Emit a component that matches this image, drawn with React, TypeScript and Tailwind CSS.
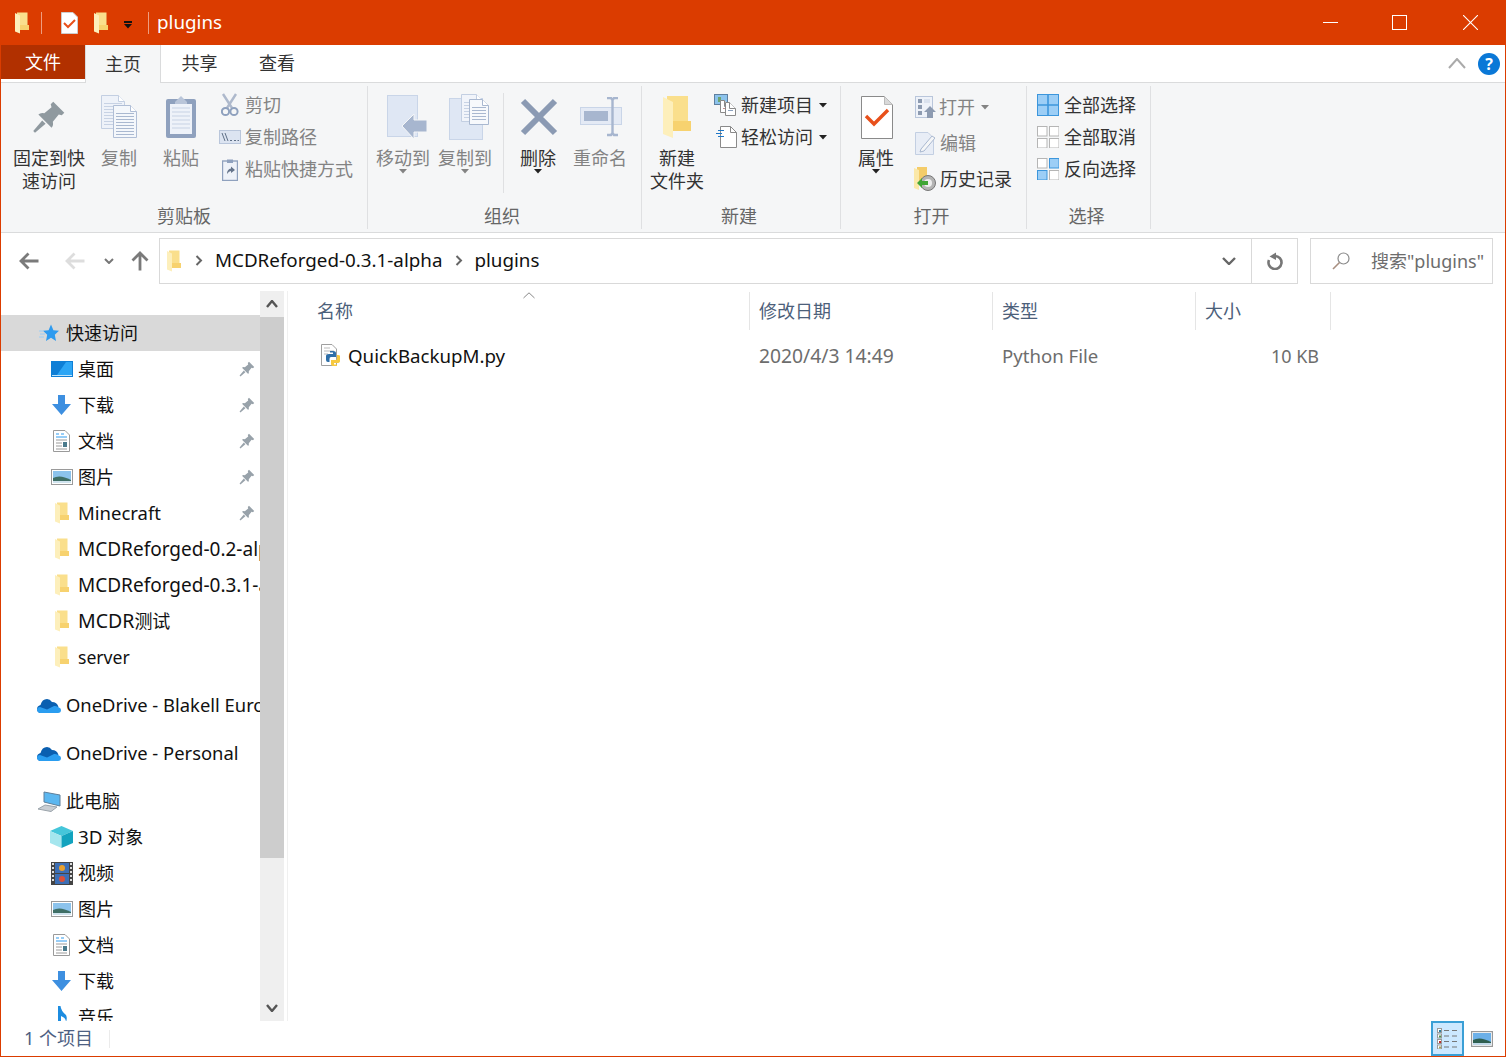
import type { ReactNode } from "react"

const FONT = { fontFamily: '"Noto Sans", "Noto Sans CJK SC", sans-serif' }
// Latin runs come out a touch narrow next to the reference, CJK is right at 18px
const LATIN = "text-[18.8px]"

function Folder({ w = 14, h = 22 }: { w?: number; h?: number }) {
  return (
    <svg width={w} height={h} viewBox="0 0 14 22">
      <path d="M2 0.5H12.5V13H14V18H2Z" fill="#FADF8C" />
      <path d="M5 13H14V18H5Z" fill="#F7D26F" />
      <path d="M0 1L5 3.5V21.5L0 19.5Z" fill="#FDEFBB" />
    </svg>
  )
}

function Caret({ color = "#222" }: { color?: string }) {
  return (
    <svg width="8" height="5" viewBox="0 0 8 5">
      <path d="M0 0H8L4 4.5Z" fill={color} />
    </svg>
  )
}

function Pin({ size = 16, color = "#98A2AA" }: { size?: number; color?: string }) {
  return (
    <svg width={size} height={size} viewBox="0 0 16 16">
      <path d="M10 .8L15.2 6 14 7.2 12.6 6.8 9.8 10.2Q10.2 12 9.2 13L3 6.8Q4 5.8 5.8 6.2L9.2 3.4 8.8 2Z" fill={color} />
      <path d="M4.8 9.6L6.4 11.2 1.4 15.4.6 14.6Z" fill={color} />
    </svg>
  )
}

function Page({ x, y, w, h, stroke, fill, line }: { x: number; y: number; w: number; h: number; stroke: string; fill: string; line: string }) {
  const rows = []
  for (let ly = y + 8; ly < y + h - 3; ly += 3) rows.push(ly)
  return (
    <g>
      <path d={`M${x + 0.5} ${y + 0.5}H${x + w - 6.5}L${x + w - 0.5} ${y + 6.5}V${y + h - 0.5}H${x + 0.5}Z`} fill={fill} stroke={stroke} />
      <path d={`M${x + w - 6.5} ${y + 0.5}V${y + 6.5}H${x + w - 0.5}`} fill="#fff" stroke={stroke} />
      {rows.map((ly) => (
        <path key={ly} d={`M${x + 3} ${ly + 0.5}H${x + w - 3}`} stroke={line} />
      ))}
    </g>
  )
}

function CopyIcon() {
  return (
    <svg width="37" height="44" viewBox="0 0 37 44">
      <Page x={0} y={0} w={24} h={34} stroke="#C3CFE2" fill="#EEF2F9" line="#C7D2E4" />
      <Page x={12} y={10} w={24} h={33} stroke="#B0BED6" fill="#F4F7FB" line="#A9B8D0" />
    </svg>
  )
}

function PasteIcon() {
  return (
    <svg width="32" height="44" viewBox="0 0 32 44">
      <rect x="1" y="4" width="30" height="39" rx="2" fill="#8FA1BE" />
      <rect x="5" y="9" width="22" height="30" fill="#EEF2F9" />
      {[13, 17, 21, 25, 29, 33].map((y) => (
        <path key={y} d={`M7 ${y}H25`} stroke="#C7D2E4" />
      ))}
      <path d="M10 7L13 4 16 1 19 4 22 7V9H10Z" fill="#B9C5D9" />
    </svg>
  )
}

function ScissorsIcon() {
  return (
    <svg width="18" height="24" viewBox="0 0 18 24">
      <path d="M2 1L11 15M15 1L6 15" stroke="#AEB9CC" strokeWidth="2.4" />
      <circle cx="4.5" cy="18.5" r="3.6" fill="none" stroke="#8FA1BE" strokeWidth="2" />
      <circle cx="13" cy="18.5" r="3.6" fill="none" stroke="#8FA1BE" strokeWidth="2" />
    </svg>
  )
}

function CopyPathIcon() {
  return (
    <svg width="22" height="14" viewBox="0 0 22 14">
      <rect x=".5" y=".5" width="21" height="13" fill="#DCE4F1" stroke="#B9C6DB" />
      <path d="M3 3L6 11M6 3L9 11" stroke="#5F7087" />
      <path d="M11 10.5H13M15 10.5H17M18.5 10.5H20" stroke="#5F7087" />
    </svg>
  )
}

function ShortcutIcon() {
  return (
    <svg width="16" height="23" viewBox="0 0 16 23">
      <rect x=".5" y="3" width="15" height="19.5" fill="#EEF2F9" stroke="#8FA1BE" strokeWidth="1.4" />
      <path d="M5 1.5H11V5H5Z" fill="#8FA1BE" />
      <path d="M5 16Q5 11 9 10.5V8.5L13 12 9 15V13Q7 13 5 16Z" fill="#66758C" />
    </svg>
  )
}

function MoveIcon() {
  return (
    <svg width="40" height="44" viewBox="0 0 40 44" className="ml-[8px]">
      <rect x=".5" y=".5" width="30" height="41" fill="#DFE7F4" stroke="#C9D5E8" />
      <path d="M15 31L27 19V25H40V37H27V44Z" fill="#A7B6CF" stroke="#F5F6F7" />
    </svg>
  )
}

function CopyToIcon() {
  return (
    <svg width="41" height="46" viewBox="0 0 41 46" className="ml-[9px]">
      <rect x=".5" y="4.5" width="33" height="41" fill="#DFE7F4" stroke="#C9D5E8" />
      <Page x={12} y={0} w={22} h={28} stroke="#C3CFE2" fill="#F1F4FA" line="#C7D2E4" />
      <Page x={20} y={5} w={20} h={26} stroke="#A9B8D0" fill="#F7F9FC" line="#A9B8D0" />
    </svg>
  )
}

function DeleteIcon() {
  return (
    <svg width="38" height="38" viewBox="0 0 38 38" className="ml-[2px]">
      <path d="M3 3L35 35M35 3L3 35" stroke="#8B9AB3" strokeWidth="6" />
    </svg>
  )
}

function RenameIcon() {
  return (
    <svg width="42" height="40" viewBox="0 0 42 40" className="ml-[2px]">
      <rect x=".5" y="10.5" width="41" height="17" fill="#E4EAF5" stroke="#C9D5E8" />
      <rect x="4" y="14" width="24" height="10" fill="#A7B6CF" />
      <path d="M27 1H31L32.5 3 34 1H38M32.5 3V36M27 38H31L32.5 36 34 38H38" fill="none" stroke="#A7B6CF" strokeWidth="2.4" />
    </svg>
  )
}

function NewItemIcon() {
  return (
    <svg width="22" height="22" viewBox="0 0 22 22" className="-ml-[2px]">
      <rect x=".5" y=".5" width="13" height="10" fill="#8CC3EC" stroke="#5F7F9F" />
      <rect x="4" y="3" width="3" height="5" fill="#6EA46E" />
      <Page x={6} y={6} w={11} h={13} stroke="#8A8A8A" fill="#fff" line="#C09090" />
      <Page x={11} y={8} w={11} h={14} stroke="#8A8A8A" fill="#fff" line="#8AA0BE" />
    </svg>
  )
}

function EasyAccessIcon() {
  return (
    <svg width="21" height="22" viewBox="0 0 21 22">
      <path d="M4.5 .5H14.5L20.5 6.5V21.5H4.5Z" fill="#fff" stroke="#8A8A8A" />
      <path d="M14.5 .5V6.5H20.5" fill="none" stroke="#8A8A8A" />
      <path d="M2 4.5H8M0 7.5H6M2 10.5H8" stroke="#1F78C8" />
    </svg>
  )
}

function PropertiesIcon() {
  return (
    <svg width="32" height="43" viewBox="0 0 32 43" className="ml-[2px] mt-[2px]">
      <path d="M.5 .5H23.5L31.5 8.5V42.5H.5Z" fill="#fff" stroke="#8A8A8A" />
      <path d="M23.5 .5V8.5H31.5Z" fill="#D9D9D9" stroke="#BBB" />
      <path d="M5 20L13 28 27 14" fill="none" stroke="#E8501B" strokeWidth="3.4" />
    </svg>
  )
}

function OpenIcon() {
  return (
    <svg width="21" height="23" viewBox="0 0 21 23">
      <rect x=".5" y=".5" width="17" height="21" fill="#EEF2F9" stroke="#B9C6DB" />
      <rect x="3" y="3" width="4" height="4" fill="#8D9BB1" />
      <rect x="3" y="9" width="4" height="4" fill="#8D9BB1" />
      <rect x="3" y="15" width="4" height="4" fill="#8D9BB1" />
      <path d="M9 4H15M9 6H15" stroke="#C7D2E4" />
      <path d="M15 10L21 16H18V22H12V16H9Z" fill="#8D9BB1" />
    </svg>
  )
}

function EditIcon() {
  return (
    <svg width="20" height="23" viewBox="0 0 20 23">
      <path d="M.5 .5H13L18.5 6V22.5H.5Z" fill="#E8EDF6" stroke="#C3CFE2" />
      <path d="M6 17L17 4 20 6 9 19 5 20Z" fill="#F5F6F7" stroke="#A9B8D0" />
    </svg>
  )
}

function HistoryIcon() {
  return (
    <svg width="22" height="24" viewBox="0 0 22 24">
      <path d="M3 0H13V15H3Z" fill="#F4CC69" />
      <path d="M0 1L5 3V23L0 21Z" fill="#FBE8A8" />
      <circle cx="14" cy="16" r="7.5" fill="#B4B4B4" stroke="#777" />
      <circle cx="14" cy="16" r="4" fill="#EDEDED" />
      <path d="M3 16L8 11V14H14V18H8V21Z" fill="#3FA535" />
    </svg>
  )
}

function GridIcon({ on }: { on: number[] }) {
  const cells = [
    [0, 0],
    [12, 0],
    [0, 12],
    [12, 12],
  ]
  return (
    <svg width="22" height="22" viewBox="0 0 22 22">
      {cells.map(([x, y], i) => (
        <rect
          key={i}
          x={x + 0.5}
          y={y + 0.5}
          width="9.5"
          height="9.5"
          fill={on.includes(i) ? "#9CCEF6" : "#fff"}
          stroke={on.includes(i) ? "#3C96DC" : "#B5B5B5"}
        />
      ))}
    </svg>
  )
}

function SelectAllIcon() {
  return (
    <svg width="22" height="22" viewBox="0 0 22 22">
      <rect x=".5" y=".5" width="21" height="21" fill="#9CCEF6" stroke="#3C96DC" />
      <path d="M11 0V22M0 11H22" stroke="#3C96DC" strokeWidth="1.6" />
    </svg>
  )
}

function Arrow({ color, up }: { color: string; up?: boolean }) {
  return (
    <svg width="20" height="18" viewBox="0 0 20 18" className={up ? "rotate-90" : ""}>
      <path d="M19.5 9H2.5M9.5 1.5L2 9 9.5 16.5" fill="none" stroke={color} strokeWidth="2.8" />
    </svg>
  )
}

function Chevron({ width = 10, height = 6, color = "#666", sw = 2, up = false }: { width?: number; height?: number; color?: string; sw?: number; up?: boolean }) {
  const d = up ? `M1 ${height - 1}L${width / 2} 1 ${width - 1} ${height - 1}` : `M1 1L${width / 2} ${height - 1} ${width - 1} 1`
  return (
    <svg width={width} height={height} viewBox={`0 0 ${width} ${height}`}>
      <path d={d} fill="none" stroke={color} strokeWidth={sw} />
    </svg>
  )
}

function StarIcon() {
  return (
    <svg width="20" height="18" viewBox="0 0 20 18">
      <path d="M12 .5L14.4 6.2 20 6.8 15.8 10.8 17 17 12 13.8 7 17 8.2 10.8 4 6.8 9.6 6.2Z" fill="#2E9BEF" />
      <path d="M0 7H5M1 10H6M0 13H5" stroke="#9CCEF6" />
    </svg>
  )
}

function DesktopIcon() {
  return (
    <svg width="22" height="16" viewBox="0 0 22 16">
      <rect width="22" height="16" fill="#0F7FD6" />
      <path d="M6 14L15 1H21V14Z" fill="#2DA6F5" />
      <path d="M1 14.5H21" stroke="#BFE3FA" />
    </svg>
  )
}

function DownloadIcon() {
  return (
    <svg width="19" height="20" viewBox="0 0 19 20">
      <path d="M6 0H13V9H19L9.5 20 0 9H6Z" fill="#3D8FE0" />
    </svg>
  )
}

function DocIcon() {
  return (
    <svg width="17" height="22" viewBox="0 0 17 22">
      <path d="M.5 .5H12L16.5 5V21.5H.5Z" fill="#fff" stroke="#9A9A9A" />
      <path d="M3 4H6M8 4H11M3 7H14" stroke="#2E9BEF" />
      <path d="M3 10H14M3 13H9M3 16H9M3 19H14" stroke="#9A9A9A" />
      <rect x="10" y="12" width="4" height="5" fill="#4A7A8C" />
    </svg>
  )
}

function PicIcon() {
  return (
    <svg width="22" height="16" viewBox="0 0 22 16">
      <rect x=".5" y=".5" width="21" height="15" fill="#fff" stroke="#9A9A9A" />
      <rect x="2" y="2" width="18" height="12" fill="#8CC3EC" />
      <path d="M2 9Q9 5 20 11V14H2Z" fill="#3F6F66" />
      <path d="M2 12H20V14H2Z" fill="#CFE3EE" />
    </svg>
  )
}

function OneDriveIcon() {
  return (
    <svg width="24" height="15" viewBox="0 0 24 15">
      <path d="M3 15Q0 14 0 11 0 8 3.5 7 5 1 10 1 13 1 15 4 20 4 21.5 9L10 15Z" fill="#0A5FB0" />
      <path d="M3 15Q0 14 0 11.5 0 9.5 3 9L10 11.5 17 8Q20 7.5 22 9.5 24 10 24 12 24 15 21 15Z" fill="#2A9DF0" />
    </svg>
  )
}

function PcIcon() {
  return (
    <svg width="24" height="21" viewBox="0 0 24 21">
      <path d="M7 1L23 4V15L7 11Z" fill="#5CB7F0" stroke="#5E7F9A" />
      <path d="M1 18L8 14 20 16 14 20.5Z" fill="#C9CED3" stroke="#9AA3AA" />
    </svg>
  )
}

function CubeIcon() {
  return (
    <svg width="23" height="22" viewBox="0 0 23 22">
      <path d="M11.5 0L23 5 11.5 10 0 5Z" fill="#45C6DA" />
      <path d="M0 5L11.5 10V22L0 17Z" fill="#A5E6EE" />
      <path d="M23 5L11.5 10V22L23 17Z" fill="#12A3BE" />
    </svg>
  )
}

function VideoIcon() {
  return (
    <svg width="22" height="23" viewBox="0 0 22 23">
      <rect width="22" height="23" fill="#444" />
      <rect x="4" y="1" width="14" height="10" fill="#3D6FB5" />
      <rect x="4" y="12" width="14" height="10" fill="#3D6FB5" />
      <circle cx="11" cy="6" r="3" fill="#E8A030" />
      <circle cx="11" cy="17" r="3" fill="#D9503A" />
      {[1, 5, 9, 13, 17].map((y) => (
        <g key={y}>
          <rect x="1" y={y} width="2" height="2" fill="#ddd" />
          <rect x="19" y={y} width="2" height="2" fill="#ddd" />
        </g>
      ))}
    </svg>
  )
}

function MusicIcon() {
  return (
    <svg width="12" height="22" viewBox="0 0 12 22">
      <path d="M2 0H4.5Q5 5 10 9 11.5 12 10 16 10 12 5 10V20H2Z" fill="#1C8CE0" />
    </svg>
  )
}

function PythonFileIcon() {
  return (
    <svg width="20" height="24" viewBox="0 0 20 24">
      <path d="M.5 .5H11L15.5 5V21.5H.5Z" fill="#fff" stroke="#A0A0A0" />
      <path d="M3 4H9M3 7H13M3 10H7" stroke="#BBB" />
      <path d="M5 16V12Q5 10 8 10H12V8.5H9V7H12Q15 7 15 9V13H10Q8.5 13 8.5 15V18H7Q5 18 5 16Z" fill="#2F6FA8" />
      <path d="M19 12V17Q19 19 16 19H13V20.5H16V22H13Q10 22 10 20V16H15Q16 16 16 14V11H17Q19 11 19 12Z" fill="#F7C93E" />
    </svg>
  )
}

function LargeBtn({ w, icon, lines, dim, caret, capColor }: { w: number; icon: ReactNode; lines: string[]; dim?: boolean; caret?: boolean; capColor?: string }) {
  return (
    <div style={{ width: w }} className="flex shrink-0 flex-col items-center">
      <div className="flex h-[61px] items-center justify-center">{icon}</div>
      <div className={`text-center text-[18px] leading-[23px] whitespace-nowrap ${dim ? "text-[#838383]" : "text-[#333]"}`}>
        {lines.map((l) => (
          <div key={l}>{l}</div>
        ))}
      </div>
      {caret && (
        <div className="-mt-[1px] flex h-[5px] items-center">
          <Caret color={capColor} />
        </div>
      )}
    </div>
  )
}

function SmallBtn({ icon, label, dim, h = "h-[32px]", iconW = "w-[24px]", gap = "gap-[3px]", caret, capColor }: { icon: ReactNode; label: string; dim?: boolean; h?: string; iconW?: string; gap?: string; caret?: boolean; capColor?: string }) {
  return (
    <div className={`flex items-center ${h} ${gap}`}>
      <div className={`flex justify-center ${iconW}`}>{icon}</div>
      <span className={`text-[18px] whitespace-nowrap ${dim ? "text-[#838383]" : "text-[#333]"}`}>{label}</span>
      {caret && (
        <span className="ml-[3px] flex">
          <Caret color={capColor} />
        </span>
      )}
    </div>
  )
}

function Group({ w, label, className, labelPad, children }: { w: string; label: string; className: string; labelPad?: string; children: ReactNode }) {
  return (
    <div className={`flex shrink-0 flex-col border-r border-[#DFE0E2] ${w}`}>
      <div className={`flex flex-1 ${className}`}>{children}</div>
      <div className={`h-[24px] text-center text-[18px] leading-[22px] text-[#666] ${labelPad ?? ""}`}>{label}</div>
    </div>
  )
}

function TreeRow({ icon, label, indent, pinned, selected }: { icon: ReactNode; label: ReactNode; indent?: boolean; pinned?: boolean; selected?: boolean }) {
  return (
    <div className={`flex h-[36px] items-center overflow-hidden text-[18px] whitespace-nowrap text-[#111] ${selected ? "bg-[#D9D9D9]" : ""}`}>
      <div className={`flex shrink-0 justify-center ${indent ? "ml-[49px] w-[23px]" : "ml-[36px] w-[24px]"}`}>{icon}</div>
      <span className="ml-[5px]">{label}</span>
      {pinned && (
        <span className="mr-[5px] ml-auto flex shrink-0">
          <Pin />
        </span>
      )}
    </div>
  )
}

const headers = [
  { label: "名称", w: "w-[462px]", pad: "pl-[29px]" },
  { label: "修改日期", w: "w-[243px]", pad: "pl-[9px]" },
  { label: "类型", w: "w-[203px]", pad: "pl-[9px]" },
  { label: "大小", w: "w-[135px]", pad: "pl-[9px]" },
]

export default function App() {
  return (
    <div style={FONT} className="flex h-[1057px] w-[1506px] flex-col overflow-hidden border-x border-b border-[#DB3C00] bg-white">
      {/* title bar */}
      <div className="-mx-px flex h-[45px] shrink-0 items-center bg-[#DB3C00] pl-[15px] text-white">
        <Folder />
        <div className="ml-[12px] h-[22px] w-px bg-[#EE9D80]" />
        <svg width="17" height="22" viewBox="0 0 17 22" className="ml-[19px]">
          <path d="M.5 .5H12L16.5 5V21.5H.5Z" fill="#fff" stroke="#CCC" />
          <path d="M3 11L7 15 14 8" fill="none" stroke="#E8501B" strokeWidth="2" />
        </svg>
        <div className="ml-[16px] flex">
          <Folder />
        </div>
        <div className="ml-[16px] flex flex-col items-center gap-[1px] pt-[4px]">
          <div className="h-[2px] w-[8px] bg-[#111]" />
          <Caret color="#111" />
        </div>
        <div className="ml-[16px] h-[22px] w-px bg-[#EE9D80]" />
        <span className={`ml-[8px] ${LATIN}`}>plugins</span>
        <div className="ml-auto flex">
          <div className="flex h-[45px] w-[70px] items-center justify-center">
            <div className="h-px w-[15px] bg-white" />
          </div>
          <div className="flex h-[45px] w-[69px] items-center justify-center">
            <div className="h-[15px] w-[15px] border border-white" />
          </div>
          <div className="flex h-[45px] w-[72px] items-center justify-center">
            <svg width="15" height="15" viewBox="0 0 15 15">
              <path d="M0 0L15 15M15 0L0 15" stroke="#fff" strokeWidth="1.1" />
            </svg>
          </div>
        </div>
      </div>

      {/* tabs */}
      <div className="flex h-[38px] shrink-0 border-b border-[#DADBDC] text-[18px]">
        <div className="flex h-[34px] w-[84px] items-center justify-center bg-[#B13000] text-white">文件</div>
        <div className="flex h-[38px] w-[76px] items-center justify-center border-x border-[#DADBDC] bg-[#F5F6F7] text-[#333]">主页</div>
        <div className="flex w-[77px] items-center justify-center text-[#333]">共享</div>
        <div className="flex w-[78px] items-center justify-center text-[#333]">查看</div>
        <div className="mr-[5px] ml-auto flex items-center gap-[12px]">
          <Chevron width={18} height={11} color="#AAA" up />
          <div className="flex h-[22px] w-[22px] items-center justify-center rounded-full bg-[#0A78D7] text-[16px] font-bold text-white">?</div>
        </div>
      </div>

      {/* ribbon */}
      <div className="flex h-[150px] shrink-0 border-b border-[#DADBDC] bg-[#F5F6F7] py-[3px]">
        <Group w="w-[367px]" label="剪贴板" className="pl-[10px]">
          <LargeBtn w={76} icon={<Pin size={34} color="#8F999F" />} lines={["固定到快", "速访问"]} />
          <LargeBtn w={64} dim icon={<CopyIcon />} lines={["复制"]} />
          <LargeBtn w={60} dim icon={<PasteIcon />} lines={["粘贴"]} />
          <div className="ml-[7px] pt-[3px]">
            <SmallBtn dim icon={<ScissorsIcon />} label="剪切" />
            <SmallBtn dim icon={<CopyPathIcon />} label="复制路径" />
            <SmallBtn dim icon={<ShortcutIcon />} label="粘贴快捷方式" />
          </div>
        </Group>
        <Group w="w-[274px]" label="组织" className="pl-[4px]" labelPad="pr-[5px]">
          <LargeBtn w={62} dim caret capColor="#838383" icon={<MoveIcon />} lines={["移动到"]} />
          <LargeBtn w={62} dim caret capColor="#838383" icon={<CopyToIcon />} lines={["复制到"]} />
          <div className="mt-[7px] ml-[7px] h-[100px] w-px bg-[#DFE0E2]" />
          <LargeBtn w={68} caret icon={<DeleteIcon />} lines={["删除"]} />
          <LargeBtn w={56} dim icon={<RenameIcon />} lines={["重命名"]} />
        </Group>
        <Group w="w-[199px]" label="新建" className="pl-[4px]" labelPad="pr-[4px]">
          <LargeBtn w={62} icon={<Folder w={30} h={44} />} lines={["新建", "文件夹"]} />
          <div className="ml-[6px] pt-[3px]">
            <SmallBtn icon={<NewItemIcon />} label="新建项目" caret />
            <SmallBtn icon={<EasyAccessIcon />} label="轻松访问" caret />
          </div>
        </Group>
        <Group w="w-[186px]" label="打开" className="pl-[4px]" labelPad="pr-[4px]">
          <LargeBtn w={62} caret icon={<PropertiesIcon />} lines={["属性"]} />
          <div className="ml-[7px] pt-[3px]">
            <SmallBtn dim h="h-[36px]" iconW="w-[22px]" caret capColor="#838383" icon={<OpenIcon />} label="打开" />
            <SmallBtn dim h="h-[36px]" iconW="w-[22px]" gap="gap-[4px]" icon={<EditIcon />} label="编辑" />
            <SmallBtn h="h-[36px]" iconW="w-[22px]" gap="gap-[4px]" icon={<HistoryIcon />} label="历史记录" />
          </div>
        </Group>
        <Group w="w-[124px]" label="选择" className="pl-[10px]" labelPad="pr-[4px]">
          <div className="pt-[3px]">
            <SmallBtn iconW="w-[22px]" gap="gap-[5px]" icon={<SelectAllIcon />} label="全部选择" />
            <SmallBtn iconW="w-[22px]" gap="gap-[5px]" icon={<GridIcon on={[]} />} label="全部取消" />
            <SmallBtn iconW="w-[22px]" gap="gap-[5px]" icon={<GridIcon on={[1, 2]} />} label="反向选择" />
          </div>
        </Group>
      </div>

      {/* address bar */}
      <div className="flex h-[55px] shrink-0 items-center">
        <div className="ml-[18px] flex">
          <Arrow color="#7A7A7A" />
        </div>
        <div className="ml-[26px] flex">
          <Arrow color="#DDDDDD" />
        </div>
        <div className="ml-[19px] flex">
          <Chevron width={10} height={6} color="#777" />
        </div>
        <div className="ml-[16px] flex">
          <Arrow color="#7A7A7A" up />
        </div>
        <div className="ml-[9px] flex h-[46px] w-[1139px] items-center border border-[#D9D9D9] text-[18px] text-[#111]">
          <div className="ml-[7px] flex">
            <Folder />
          </div>
          <svg width="8" height="11" viewBox="0 0 8 11" className="ml-[14px]">
            <path d="M1.5 1L6 5.5 1.5 10" fill="none" stroke="#666" strokeWidth="2" />
          </svg>
          <span className={`ml-[12px] ${LATIN}`}>MCDReforged-0.3.1-alpha</span>
          <svg width="8" height="11" viewBox="0 0 8 11" className="ml-[13px]">
            <path d="M1.5 1L6 5.5 1.5 10" fill="none" stroke="#666" strokeWidth="2" />
          </svg>
          <span className={`ml-[11px] ${LATIN}`}>plugins</span>
          <div className="ml-auto flex h-full items-center">
            <Chevron width={14} height={8} color="#666" sw={2.4} />
            <div className="ml-[15px] h-full w-px bg-[#D9D9D9]" />
            <svg width="18" height="18" viewBox="0 0 18 18" className="mr-[13px] ml-[14px]">
              <path d="M9 4A6.5 6.5 0 1 1 3 8" fill="none" stroke="#777" strokeWidth="2.6" />
              <path d="M3.5 4.5L10 0.5V8Z" fill="#777" />
            </svg>
          </div>
        </div>
        <div className="ml-[12px] flex h-[46px] w-[183px] items-center border border-[#D9D9D9] pt-[1px] text-[18px] text-[#6D6D6D]">
          <svg width="20" height="20" viewBox="0 0 20 20" className="ml-[20px]">
            <circle cx="12.5" cy="7.5" r="5.5" fill="none" stroke="#8A8A8A" strokeWidth="1.2" />
            <path d="M8.5 11.5L2 18" stroke="#A88F80" strokeWidth="1.6" />
          </svg>
          <span className="ml-[20px] whitespace-nowrap">搜索"plugins"</span>
        </div>
      </div>

      {/* body */}
      <div className="flex min-h-0 flex-1">
        <div className="w-[259px] shrink-0 overflow-hidden pt-[27px]">
          <TreeRow selected icon={<StarIcon />} label="快速访问" />
          <TreeRow indent pinned icon={<DesktopIcon />} label="桌面" />
          <TreeRow indent pinned icon={<DownloadIcon />} label="下载" />
          <TreeRow indent pinned icon={<DocIcon />} label="文档" />
          <TreeRow indent pinned icon={<PicIcon />} label="图片" />
          <TreeRow indent pinned icon={<Folder />} label={<span className="text-[18.5px]">Minecraft</span>} />
          <TreeRow indent icon={<Folder />} label={<span className="text-[19px]">MCDReforged-0.2-alpha</span>} />
          <TreeRow indent icon={<Folder />} label={<span className="text-[19px]">MCDReforged-0.3.1-alpha</span>} />
          <TreeRow indent icon={<Folder />} label={<><span className="text-[19.5px]">MCDR</span>测试</>} />
          <TreeRow indent icon={<Folder />} label={<span className="text-[17.6px]">server</span>} />
          <div className="h-[12px]" />
          <TreeRow icon={<OneDriveIcon />} label={<span className="text-[18.4px]">OneDrive - Blakell Europlacer</span>} />
          <div className="h-[12px]" />
          <TreeRow icon={<OneDriveIcon />} label={<span className="text-[18.4px]">OneDrive - Personal</span>} />
          <div className="h-[12px]" />
          <TreeRow icon={<PcIcon />} label="此电脑" />
          <TreeRow indent icon={<CubeIcon />} label={<><span className={LATIN}>3D</span> 对象</>} />
          <TreeRow indent icon={<VideoIcon />} label="视频" />
          <TreeRow indent icon={<PicIcon />} label="图片" />
          <TreeRow indent icon={<DocIcon />} label="文档" />
          <TreeRow indent icon={<DownloadIcon />} label="下载" />
          <TreeRow indent icon={<MusicIcon />} label="音乐" />
        </div>

        <div className="mt-[3px] flex w-[24px] shrink-0 flex-col bg-[#EFEFEF]">
          <div className="flex h-[26px] items-center justify-center">
            <Chevron width={12} height={8} color="#555" sw={2.4} up />
          </div>
          <div className="h-[541px] bg-[#CDCDCD]" />
          <div className="mt-auto flex h-[26px] items-center justify-center">
            <Chevron width={12} height={8} color="#555" sw={2.4} />
          </div>
        </div>

        <div className="mt-[3px] ml-[3px] w-px shrink-0 bg-[#F0F0F0]" />

        <div className="relative min-w-0 flex-1">
          <svg width="12" height="7" viewBox="0 0 12 7" className="absolute top-[4px] left-[235px]">
            <path d="M.5 6L6 .8 11.5 6" fill="none" stroke="#888" />
          </svg>
          <div className="mt-[4px] flex h-[38px] text-[18px] text-[#4C607A]">
            {headers.map((h) => (
              <div key={h.label} className={`flex shrink-0 items-center border-r border-[#E5E5E5] ${h.w} ${h.pad}`}>
                {h.label}
              </div>
            ))}
          </div>
          <div className="mt-[8px] flex h-[36px] items-center text-[18px]">
            <div className="flex w-[462px] shrink-0 items-center pl-[33px] text-[#111]">
              <PythonFileIcon />
              <span className="ml-[7px] text-[18.7px]">QuickBackupM.py</span>
            </div>
            <div className="w-[243px] shrink-0 pl-[9px] text-[19.3px] text-[#6D6D6D]">2020/4/3 14:49</div>
            <div className="w-[203px] shrink-0 pl-[9px] text-[18.6px] text-[#6D6D6D]">Python File</div>
            <div className="w-[135px] shrink-0 pr-[12px] text-right text-[#6D6D6D]">10 KB</div>
          </div>
        </div>
      </div>

      {/* status bar */}
      <div className="flex h-[35px] shrink-0 items-center text-[18px] text-[#4D6082]">
        <span className="ml-[23px] whitespace-nowrap">1 个项目</span>
        <div className="ml-[16px] h-[18px] w-px bg-[#EBEBEB]" />
        <div className="mr-[12px] ml-auto flex items-center gap-[7px]">
          <div className="flex h-[35px] w-[33px] items-center justify-center border-2 border-[#3A9FD6] bg-[#CCE8FF]">
            <svg width="21" height="21" viewBox="0 0 21 21">
              {[0, 5.5, 11, 16.5].map((y, i) => (
                <g key={y}>
                  <rect x=".5" y={y + 0.5} width="4" height="4" fill="#fff" stroke="#999" />
                  <rect x="2" y={y + 2} width="2" height="2" fill={["#2F7F9F", "#4F8F4F", "#C03030", "#A0A060"][i]} />
                  <path d={`M7 ${y + 2.5}H12M15 ${y + 2.5}H20`} stroke="#777" />
                </g>
              ))}
            </svg>
          </div>
          <svg width="22" height="16" viewBox="0 0 22 16">
            <rect x=".5" y=".5" width="21" height="15" fill="#fff" stroke="#999" strokeWidth="1.4" />
            <rect x="2" y="2" width="18" height="12" fill="#6CB0E8" />
            <path d="M2 9Q9 5 20 11V14H2Z" fill="#2F5F50" />
            <path d="M2 12H20V14H2Z" fill="#BFD8E8" />
          </svg>
        </div>
      </div>
    </div>
  )
}
